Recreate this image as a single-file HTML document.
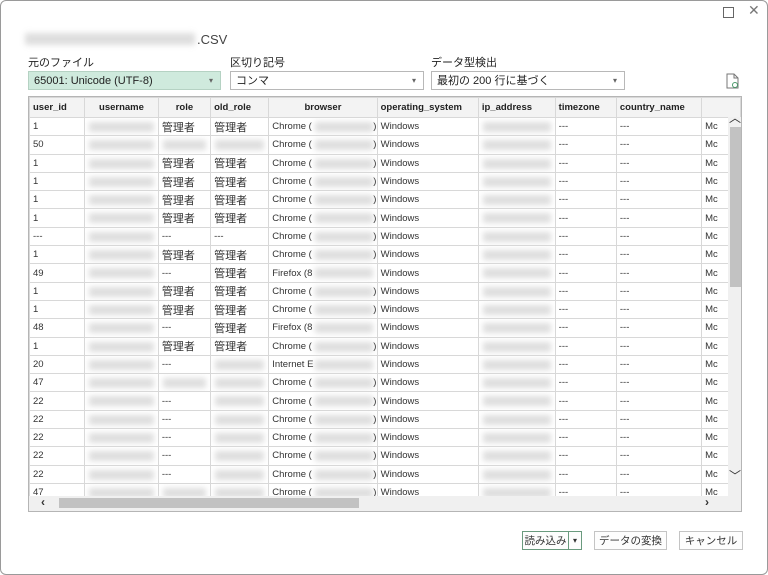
<!DOCTYPE html><html><head><meta charset="utf-8"><style>
body{margin:0;width:768px;height:575px;background:#fff;font-family:"Liberation Sans","Noto Sans CJK JP",sans-serif;overflow:hidden;position:relative}
.win{position:absolute;left:0;top:0;width:766px;height:573px;border:1px solid #9a9a9a;border-radius:6px;background:#fff}
.a{position:absolute}
.blur{background:#c8c8c8;filter:blur(3px);opacity:.6;position:absolute}
.lbl{font-size:11px;color:#222}
.dd{position:absolute;height:19px;border:1px solid #b8b8b8;font-size:11px;line-height:18px;padding-left:5px;box-sizing:border-box;color:#222}
.dd i{position:absolute;right:7px;top:0;font-style:normal;font-size:8px;color:#666}
.tbl{position:absolute;left:27px;top:95px;width:714px;height:416px;border:1px solid #b5b5b5;box-sizing:border-box;overflow:hidden}
table{border-collapse:collapse;table-layout:fixed;position:absolute;left:0;top:0}
td,th{border:1px solid #d8d8d8;height:17.3px;padding:0 3px;font-size:9.5px;color:#333;white-space:nowrap;overflow:hidden;position:relative}
th{height:19px;font-weight:bold;font-size:9.5px;color:#222;background:#f3f3f3;text-align:center}
th.l{text-align:left}
td.j{font-size:11px}
.btn{position:absolute;top:530px;height:19px;border:1px solid #c4c4c4;font-size:10.5px;line-height:18px;text-align:center;box-sizing:border-box;background:#fdfdfd;color:#333}
</style></head><body><div class="win">
<div class="a" style="left:722px;top:6px;width:9px;height:9px;border:1px solid #666"></div>
<div class="a" style="left:747px;top:1px;font-size:14px;color:#777">✕</div>
<div class="blur" style="left:24px;top:32px;width:170px;height:12px"></div>
<div class="a" style="left:196px;top:31px;font-size:13px;color:#444">.CSV</div>
<div class="a lbl" style="left:27px;top:53px">元のファイル</div>
<div class="a lbl" style="left:229px;top:53px">区切り記号</div>
<div class="a lbl" style="left:430px;top:53px">データ型検出</div>
<div class="dd" style="left:27px;top:70px;width:193px;background:#cfeadd;border-color:#b5d2c3">65001: Unicode (UTF-8)<i>▾</i></div>
<div class="dd" style="left:229px;top:70px;width:194px">コンマ<i>▾</i></div>
<div class="dd" style="left:430px;top:70px;width:194px">最初の 200 行に基づく<i>▾</i></div>
<svg class="a" style="left:725px;top:72px" width="14" height="16"><path d="M1 1h7l4 4v10H1z" fill="none" stroke="#777"/><path d="M8 1v4h4" fill="none" stroke="#777"/><circle cx="9" cy="12" r="2.5" fill="none" stroke="#4a9a6a"/></svg>
<div class="tbl">
<table id="t"><colgroup><col style="width:56px"><col style="width:75px"><col style="width:53px"><col style="width:59px"><col style="width:112px"><col style="width:102px"><col style="width:78px"><col style="width:62px"><col style="width:86px"><col style="width:40px"></colgroup>
<tr><th class="l">user_id</th><th>username</th><th>role</th><th class="l">old_role</th><th>browser</th><th class="l">operating_system</th><th class="l">ip_address</th><th class="l">timezone</th><th class="l">country_name</th><th></th></tr>
<tbody id="b"></tbody></table>
<div class="a" style="left:699px;top:20px;width:14px;height:380px;background:#f0f0f0"></div>
<div class="a" style="left:701px;top:30px;width:11px;height:160px;background:#c2c2c2"></div>
<div class="a" style="left:700px;top:12px;font-size:12px;color:#333">︿</div>
<div class="a" style="left:700px;top:370px;font-size:12px;color:#333">﹀</div>
<div class="a" style="left:0;top:399px;width:714px;height:15px;background:#f0f0f0"></div>
<div class="a" style="left:30px;top:401px;width:300px;height:10px;background:#c2c2c2"></div>
<div class="a" style="left:12px;top:398px;font-size:12px;color:#333;font-weight:bold">‹</div>
<div class="a" style="left:676px;top:398px;font-size:12px;color:#333;font-weight:bold">›</div>
</div>
<div class="btn" style="left:521px;width:47px;border-color:#6a9a7e">読み込み</div>
<div class="btn" style="left:567px;width:14px;border-color:#6a9a7e;font-size:8px">▾</div>
<div class="btn" style="left:593px;width:73px">データの変換</div>
<div class="btn" style="left:678px;width:64px">キャンセル</div>
</div>
<script>
var K='管理者',B='<span class="blur" style="left:4px;right:4px;top:4px;height:10px"></span>';
var rows=[['1',K,K,'C'],['50','b','b','C'],['1',K,K,'C'],['1',K,K,'C'],['1',K,K,'C'],['1',K,K,'C'],['---','---','---','C'],['1',K,K,'C'],['49','---',K,'F'],['1',K,K,'C'],['1',K,K,'C'],['48','---',K,'F'],['1',K,K,'C'],['20','---','b','I'],['47','b','b','C'],['22','---','b','C'],['22','---','b','C'],['22','---','b','C'],['22','---','b','C'],['22','---','b','C'],['47','b','b','C']];
var h='';rows.forEach(function(r){var br=r[3]=='C'?'Chrome (':r[3]=='F'?'Firefox (8':'Internet E';
function c(v){return v=='b'?'<td>'+B+'</td>':'<td class="'+(v==K?'j':'')+'">'+v+'</td>';}
h+='<tr><td>'+r[0]+'</td><td>'+B+'</td>'+c(r[1])+c(r[2])+'<td>'+br+'<span class="blur" style="left:46px;width:58px;top:4px;height:10px"></span>'+(r[3]=='C'?'<span style="position:absolute;left:104px">)</span>':'')+'</td><td>Windows</td><td>'+B+'</td><td>---</td><td>---</td><td>Mc</td></tr>';});
document.getElementById('b').innerHTML=h;
</script></body></html>
